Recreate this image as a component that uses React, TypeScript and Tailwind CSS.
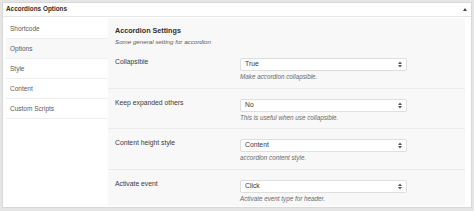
import React from 'react';

const tabs = ['Shortcode', 'Options', 'Style', 'Content', 'Custom Scripts'];

const settings = [
    { label: 'Collapsible', value: 'True', help: 'Make accordion collapsible.', h: 'h-[41px]' },
    { label: 'Keep expanded others', value: 'No', help: 'This is useful when use collapsible.', h: 'h-[40px]' },
    { label: 'Content height style', value: 'Content', help: 'accordion content style.', h: 'h-[41px]' },
    { label: 'Activate event', value: 'Click', help: 'Activate event type for header.', h: 'flex-1' },
];

const SelectArrows: React.FC = () => (
    <svg width="4" height="7" viewBox="0 0 4 7" className="shrink-0">
        <path d="M0 3 L2 0.5 L4 3 Z" fill="#555" />
        <path d="M0 4 L2 6.5 L4 4 Z" fill="#555" />
    </svg>
);

const App: React.FC = () => {
    return (
        <div
            className="w-[474px] h-[211px] bg-[#e5e5e5] pt-[2px] px-[2px] overflow-hidden"
            style={{ fontFamily: '"Liberation Sans", Arial, sans-serif' }}
        >
            <div className="h-[206px] bg-white border border-[#d8d8d8] flex flex-col">
                {/* header */}
                <div className="h-[14px] shrink-0 flex items-center justify-between pl-[3px] pr-[4px] border-b border-[#e6e6e6]">
                    <span className="text-[6.4px] font-bold text-[#2b2b2b] leading-none">Accordions Options</span>
                    <svg width="4" height="3" viewBox="0 0 4 3">
                        <path d="M0 3 L2 0 L4 3 Z" fill="#444" />
                    </svg>
                </div>

                {/* body */}
                <div className="flex-1 flex pl-[3px] pr-[6px] pt-[1px] pb-[1px]">
                    <div className="w-[102px] shrink-0 pt-[1px]">
                        {tabs.map((t) => (
                            <div
                                key={t}
                                className={`h-[20px] flex items-center pl-[4px] border-b border-[#efefef] text-[6.5px] text-[#5a5a5a] ${
                                    t === 'Options' ? 'bg-[#f8f8f8]' : 'bg-white'
                                }`}
                            >
                                {t}
                            </div>
                        ))}
                    </div>

                    <div className="flex-1 bg-[#f8f8f8] flex flex-col pl-[7px]">
                        <div className="pt-[8px] text-[7.2px] font-bold text-[#2f2f2f] leading-[10px]">
                            Accordion Settings
                        </div>
                        <div className="mt-[1px] mb-[2px] text-[6.2px] italic text-[#5a5a5a] leading-[9px]">
                            Some general setting for accordion
                        </div>

                        {settings.map((s, i) => (
                            <div
                                key={s.label}
                                className={`${s.h} flex items-start pt-[10px] -ml-[7px] pl-[7px] ${
                                    i < settings.length - 1 ? 'border-b border-[#ececec]' : ''
                                }`}
                            >
                                <div className="w-[125px] shrink-0 -mt-[1px] text-[6.8px] text-[#3a3a3a] leading-[10px]">
                                    {s.label}
                                </div>
                                <div className="flex flex-col">
                                    <div className="w-[167px] h-[13px] bg-white border border-[#dedede] rounded-[2px] flex items-center justify-between pl-[4px] pr-[4px]">
                                        <span className="text-[6.8px] text-[#3a3a3a] leading-none">{s.value}</span>
                                        <SelectArrows />
                                    </div>
                                    <div className="mt-[1px] text-[6.3px] italic text-[#6a6a6a] leading-[10px]">{s.help}</div>
                                </div>
                            </div>
                        ))}
                    </div>
                </div>
            </div>
        </div>
    );
};

export default App;
